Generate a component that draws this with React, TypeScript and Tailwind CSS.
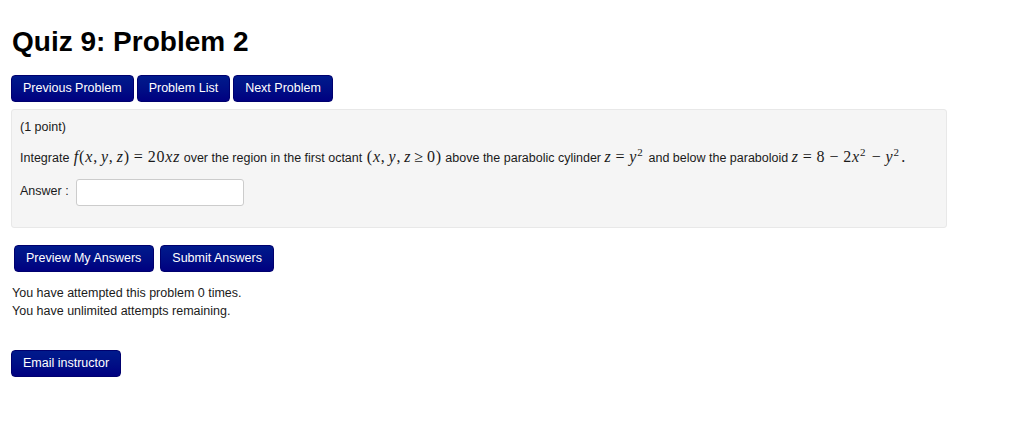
const btn = "inline-block h-[27px] px-[11px] leading-[25px] text-[12.5px] text-white rounded-[4px] border border-[#00006e] bg-gradient-to-b from-[#001a8c] to-[#000080] text-center";
function I({ children }: { children: React.ReactNode }) {
  return <i className="italic">{children}</i>;
}
function M({ children }: { children: React.ReactNode }) {
  return <span className="font-['Liberation_Serif',serif] text-[16px] tracking-[0.8px] text-[#1a1a1a]">{children}</span>;
}
function Op({ children }: { children: React.ReactNode }) {
  return <span className="mx-[4px]">{children}</span>;
}
function C() {
  return <span className="mr-[3px]">,</span>;
}
function Sup({ children }: { children: React.ReactNode }) {
  return <span className="text-[11px] leading-none align-[6px] mr-[1.5px]">{children}</span>;
}
export default function App() {
  return (
    <div className="w-[1024px] h-[440px] bg-white pl-[11px] font-['Liberation_Sans',sans-serif] text-[12.5px] text-[#1a1a1a] overflow-hidden">
      <h1 className="pt-[25px] pl-px h-[75px] text-[28px] leading-[34px] font-bold text-black">Quiz 9: Problem 2</h1>
      <div className="flex gap-[3px]">
        <a className={btn}>Previous Problem</a>
        <a className={btn}>Problem List</a>
        <a className={btn}>Next Problem</a>
      </div>
      <div className="mt-[7px] w-[936px] h-[119px] bg-[#f5f5f5] border border-[#e8e8e8] rounded-[3px] px-2 pt-[9px]">
        <div className="h-[22px] leading-[16px]">(1 point)</div>
        <div className="h-[38px] leading-[32px] whitespace-nowrap">
          Integrate <span className="ml-px" /><M><I>f</I>(<I>x</I><C /><I>y</I><C /><I>z</I>)<Op>=</Op>20<I>xz</I></M> over the region in the first octant <span className="ml-px" /><M>(<I>x</I><C /><I>y</I><C /><I>z</I><span className="mx-[3px]">≥</span>0)</M> above the parabolic cylinder <M><I>z</I><Op>=</Op><I>y</I><Sup>2</Sup></M> and below the paraboloid <M><I>z</I><Op>=</Op>8<Op>−</Op>2<I>x</I><Sup>2</Sup><Op>−</Op><I>y</I><Sup>2</Sup>.</M>
        </div>
        <div className="flex items-start gap-[7px]">
          <span className="leading-[24px]">Answer :</span>
          <input className="w-[168px] h-[27px] bg-white border border-[#ccc] rounded-[3px]" />
        </div>
      </div>
      <div className="flex gap-[6px] mt-[17px] ml-[3px]">
        <a className={`${btn} pr-[12px]`}>Preview My Answers</a>
        <a className={btn}>Submit Answers</a>
      </div>
      <div className="mt-[12px] ml-px leading-[18px]">
        <div>You have attempted this problem 0 times.</div>
        <div>You have unlimited attempts remaining.</div>
      </div>
      <div className="mt-[30px]">
        <a className={btn}>Email instructor</a>
      </div>
    </div>
  );
}
